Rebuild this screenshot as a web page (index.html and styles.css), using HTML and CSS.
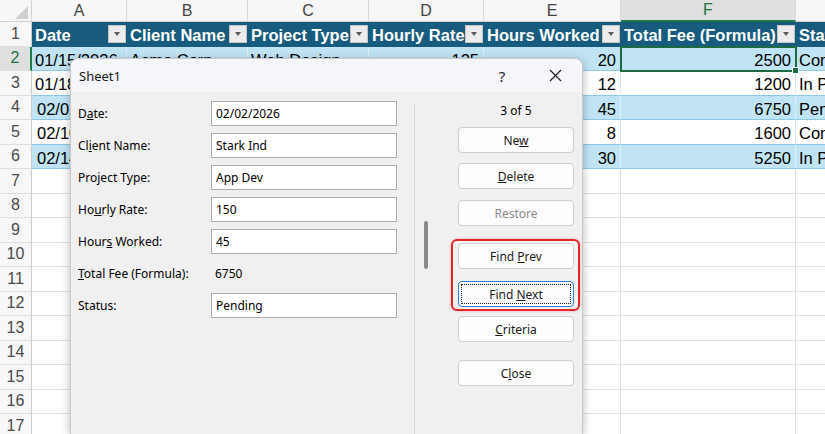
FILE: index.html
```html
<!DOCTYPE html>
<html>
<head>
<meta charset="utf-8">
<link rel="stylesheet" href="styles.css">
</head>
<body>
<div class="sheet">
  <div class="corner"><svg width="32" height="22" viewBox="0 0 32 22"><polygon points="28,6 28,19 15,19" fill="#d0d0d0"/></svg></div>
  <div class="ch">A</div><div class="ch">B</div><div class="ch">C</div><div class="ch">D</div><div class="ch">E</div><div class="ch sel">F</div><div class="ch"></div>

  <div class="rh">1</div>
  <div class="th"><span class="tt">Date</span><span class="flt"></span></div>
  <div class="th"><span class="tt">Client Name</span><span class="flt"></span></div>
  <div class="th"><span class="tt">Project Type</span><span class="flt"></span></div>
  <div class="th"><span class="tt">Hourly Rate</span><span class="flt"></span></div>
  <div class="th"><span class="tt">Hours Worked</span><span class="flt"></span></div>
  <div class="th"><span class="tt">Total Fee (Formula)</span><span class="flt"></span></div>
  <div class="th"><span class="tt">Status</span><span class="flt"></span></div>

  <div class="rh sel">2</div>
  <div class="c b">01/15/2026</div><div class="c b">Acme Corp</div><div class="c b">Web Design</div><div class="c b n">125</div><div class="c b n">20</div><div class="c b n cur">2500</div><div class="c b">Completed</div>

  <div class="rh">3</div>
  <div class="c">01/18/2026</div><div class="c">Globex</div><div class="c">SEO Audit</div><div class="c n">100</div><div class="c n">12</div><div class="c n">1200</div><div class="c">In Progress</div>

  <div class="rh">4</div>
  <div class="c b sp">02/02/2026</div><div class="c b">Stark Ind</div><div class="c b">App Dev</div><div class="c b n">150</div><div class="c b n">45</div><div class="c b n">6750</div><div class="c b">Pending</div>

  <div class="rh">5</div>
  <div class="c sp">02/10/2026</div><div class="c">Wayne Ent</div><div class="c">Consulting</div><div class="c n">200</div><div class="c n">8</div><div class="c n">1600</div><div class="c">Completed</div>

  <div class="rh">6</div>
  <div class="c b sp">02/14/2026</div><div class="c b">Initech</div><div class="c b">Web Design</div><div class="c b n">175</div><div class="c b n">30</div><div class="c b n">5250</div><div class="c b">In Progress</div>

  <div class="rh">7</div><div class="e"></div><div class="e"></div><div class="e"></div><div class="e"></div><div class="e"></div><div class="e"></div><div class="e"></div>
  <div class="rh">8</div><div class="e"></div><div class="e"></div><div class="e"></div><div class="e"></div><div class="e"></div><div class="e"></div><div class="e"></div>
  <div class="rh">9</div><div class="e"></div><div class="e"></div><div class="e"></div><div class="e"></div><div class="e"></div><div class="e"></div><div class="e"></div>
  <div class="rh">10</div><div class="e"></div><div class="e"></div><div class="e"></div><div class="e"></div><div class="e"></div><div class="e"></div><div class="e"></div>
  <div class="rh">11</div><div class="e"></div><div class="e"></div><div class="e"></div><div class="e"></div><div class="e"></div><div class="e"></div><div class="e"></div>
  <div class="rh">12</div><div class="e"></div><div class="e"></div><div class="e"></div><div class="e"></div><div class="e"></div><div class="e"></div><div class="e"></div>
  <div class="rh">13</div><div class="e"></div><div class="e"></div><div class="e"></div><div class="e"></div><div class="e"></div><div class="e"></div><div class="e"></div>
  <div class="rh">14</div><div class="e"></div><div class="e"></div><div class="e"></div><div class="e"></div><div class="e"></div><div class="e"></div><div class="e"></div>
  <div class="rh">15</div><div class="e"></div><div class="e"></div><div class="e"></div><div class="e"></div><div class="e"></div><div class="e"></div><div class="e"></div>
  <div class="rh">16</div><div class="e"></div><div class="e"></div><div class="e"></div><div class="e"></div><div class="e"></div><div class="e"></div><div class="e"></div>
  <div class="rh">17</div><div class="e"></div><div class="e"></div><div class="e"></div><div class="e"></div><div class="e"></div><div class="e"></div><div class="e"></div>
</div>

<div class="dlg">
  <div class="titlebar">
    <span class="title">Sheet1</span>
    <span class="cap help">?</span>
    <span class="cap close"><svg width="13" height="13" viewBox="0 0 13 13"><path d="M1 1 L12 12 M12 1 L1 12" stroke="#1f1f1f" stroke-width="1.2" fill="none"/></svg></span>
  </div>
  <div class="dbody">
    <div class="fields">
      <div class="lbl">D<u>a</u>te:</div><div class="field">02/02/2026</div>
      <div class="lbl">Cl<u>i</u>ent Name:</div><div class="field">Stark Ind</div>
      <div class="lbl">Pro<u>j</u>ect Type:</div><div class="field">App Dev</div>
      <div class="lbl">Ho<u>u</u>rly Rate:</div><div class="field">150</div>
      <div class="lbl">Hour<u>s</u> Worked:</div><div class="field">45</div>
      <div class="lbl"><u>T</u>otal Fee (Formula):</div><div class="val">6750</div>
      <div class="lbl">Status:</div><div class="field">Pending</div>
    </div>
    <div class="sep"></div>
    <div class="scroll"><div class="thumb"></div></div>
    <div class="btns">
      <div class="count">3 of 5</div>
      <div class="btn"><span>Ne<u>w</u></span></div>
      <div class="btn g1"><span><u>D</u>elete</span></div>
      <div class="btn g2 dis"><span>Restore</span></div>
      <div class="btn g3"><span>Find <u>P</u>rev</span></div>
      <div class="btn g4 focus"><span>Find <u>N</u>ext</span></div>
      <div class="btn g5"><span><u>C</u>riteria</span></div>
      <div class="btn g6"><span>C<u>l</u>ose</span></div>
    </div>
  </div>
  <div class="mark"></div>
</div>
</body>
</html>
```

FILE: styles.css
```css
html, body {
  margin: 0;
  padding: 0;
  width: 825px;
  height: 434px;
  overflow: hidden;
  background: #ffffff;
}
body {
  position: relative;
  font-family: "Liberation Sans", Arial, sans-serif;
}
.sheet {
  display: grid;
  grid-template-columns: 32px 95px 121px 121px 115px 137px 175px 110px;
  grid-template-rows: 22px repeat(17, 24.5px);
  width: 825px;
  overflow: hidden;
}
.sheet > div {
  box-sizing: border-box;
  overflow: hidden;
  white-space: nowrap;
}
.corner {
  background: #f7f7f7;
  border-right: 1px solid #d4d4d4;
  border-bottom: 1px solid #cfcfcf;
}
.corner svg { display: block; }
.ch {
  background: #f7f7f7;
  border-right: 1px solid #dadada;
  border-bottom: 1px solid #cfcfcf;
  color: #444;
  font-size: 16px;
  display: flex;
  align-items: center;
  justify-content: center;
}
.ch.sel {
  background: #dfdfdf;
  color: #1a7343;
  border-bottom: 2px solid #1b7a45;
}
.rh {
  background: #f7f7f7;
  border-right: 1px solid #cfcfcf;
  border-bottom: 1px solid #dedede;
  color: #4a4a4a;
  font-size: 16px;
  display: flex;
  align-items: center;
  justify-content: center;
}
.rh.sel {
  background: #dfdfdf;
  color: #1a7343;
  border-right: 2px solid #1b7a45;
}
.th {
  background: #175c7e;
  color: #ffffff;
  font-weight: bold;
  font-size: 16.5px;
  display: flex;
  align-items: center;
  justify-content: space-between;
  padding-left: 3px;
  padding-right: 1px;
}
.tt {
  overflow: hidden;
  margin-top: 3px;
}
.flt {
  flex: none;
  width: 18px;
  height: 18px;
  box-sizing: border-box;
  background: #ececec;
  border: 1px solid #c4c4c4;
  display: flex;
  align-items: center;
  justify-content: center;
}
.flt::before {
  content: "";
  width: 0;
  height: 0;
  border-left: 3.5px solid transparent;
  border-right: 3.5px solid transparent;
  border-top: 4px solid #5a5a5a;
}
.c {
  background: #ffffff;
  border-bottom: 1px solid #8ecae6;
  border-right: 1px solid #dcecf4;
  font-size: 16.5px;
  color: #000;
  display: flex;
  align-items: center;
  padding-left: 3px;
  padding-top: 4px;
}
.c.b { background: #c1e4f5; }
.c.sp { padding-left: 5px; }
.c.n {
  justify-content: flex-end;
  padding-left: 0;
  padding-right: 4px;
}
.sheet > .cur {
  position: relative;
  overflow: visible;
  outline: 2px solid #1c6b40;
  outline-offset: -1px;
  z-index: 2;
}
.cur::after {
  content: "";
  position: absolute;
  right: -4px;
  bottom: -4px;
  width: 5px;
  height: 5px;
  background: #1c6b40;
  border: 1px solid #ffffff;
}
.e {
  border-right: 1px solid #e1e1e1;
  border-bottom: 1px solid #e1e1e1;
}

/* dialog */
.dlg {
  position: absolute;
  left: 70px;
  top: 58px;
  width: 513px;
  height: 376px;
  box-sizing: border-box;
  background: #f0f0f0;
  border: 1px solid #c8c8c8;
  border-bottom: none;
  border-radius: 8px 8px 0 0;
  box-shadow: 0 2px 10px rgba(0, 0, 0, 0.28);
  font-family: "Noto Sans", "Open Sans", sans-serif;
  font-size: 12px;
  color: #000;
  display: flex;
  flex-direction: column;
}
.titlebar {
  height: 33px;
  flex: none;
  background: #f4f6f9;
  border-radius: 8px 8px 0 0;
  display: flex;
  align-items: center;
  padding-left: 8px;
  padding-right: 4px;
  gap: 7px;
}
.title {
  flex: 1;
  font-size: 13px;
  color: #1a1a1a;
}
.cap {
  width: 46px;
  height: 30px;
  display: flex;
  align-items: center;
  justify-content: center;
}
.help {
  font-size: 15px;
  color: #1f1f1f;
}
.close svg { display: block; }
.dbody {
  flex: 1;
  display: flex;
}
.fields {
  width: 343px;
  flex: none;
  box-sizing: border-box;
  padding: 9px 0 0 7px;
  display: grid;
  grid-template-columns: 133px 186px;
  grid-auto-rows: 25px;
  row-gap: 7px;
  align-items: center;
  align-content: start;
}
.lbl { white-space: nowrap; }
.field {
  height: 25px;
  box-sizing: border-box;
  background: #ffffff;
  border: 1px solid #acacac;
  padding-left: 4px;
  display: flex;
  align-items: center;
}
.val { padding-left: 4px; }
.sep {
  width: 1px;
  flex: none;
  margin-top: 11px;
  background: #d9d9d9;
}
.scroll {
  width: 43px;
  flex: none;
}
.thumb {
  margin-left: 9px;
  margin-top: 129px;
  width: 4px;
  height: 48px;
  border-radius: 2px;
  background: #8a8a8a;
}
.btns {
  width: 116px;
  flex: none;
  padding-top: 11px;
  display: flex;
  flex-direction: column;
}
.count {
  height: 16px;
  line-height: 16px;
  text-align: center;
  margin-bottom: 8px;
}
.btn {
  height: 26px;
  box-sizing: border-box;
  background: #fdfdfd;
  border: 1px solid #d0d0d0;
  border-radius: 4px;
  display: flex;
  align-items: center;
  justify-content: center;
  color: #1a1a1a;
}
.g1 { margin-top: 10px; }
.g2 { margin-top: 11px; }
.g3 { margin-top: 17px; }
.g4 { margin-top: 12px; }
.g5 { margin-top: 9px; }
.g6 { margin-top: 18px; }
.dis { color: #8a8a8a; }
.focus {
  border-color: #2f7fd8;
  outline: 1px dotted #222;
  outline-offset: -4px;
}
.mark {
  position: absolute;
  left: 380px;
  top: 180px;
  width: 129px;
  height: 72px;
  box-sizing: border-box;
  border: 2px solid #e3262b;
  border-radius: 6px;
  box-shadow: 0 0 3px rgba(227, 38, 43, 0.35);
}
```
